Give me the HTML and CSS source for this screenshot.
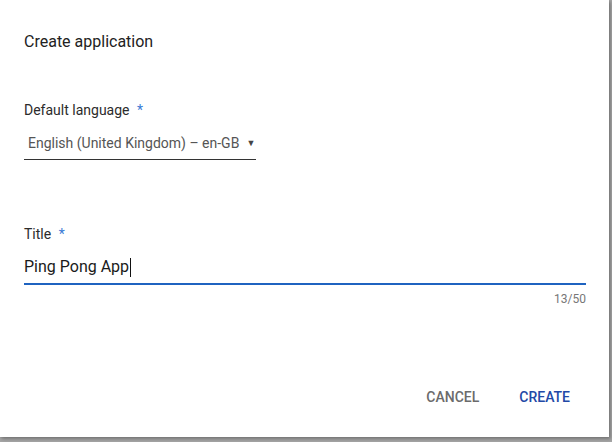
FILE: index.html
```html
<!DOCTYPE html>
<html lang="en">
<head>
<meta charset="utf-8">
<title>Create application</title>
<link rel="stylesheet" href="styles.css">
</head>
<body>
<div class="dialog">
  <h2 class="dialog-title">Create application</h2>
  <div class="field field-lang">
    <div class="label">Default language <span class="req">*</span></div>
    <div class="select">
      <span class="select-value">English (United Kingdom) – en-GB</span>
      <span class="arrow">▼</span>
    </div>
  </div>
  <div class="field field-title">
    <div class="label">Title <span class="req">*</span></div>
    <div class="input"><span class="input-value">Ping Pong App</span><span class="caret"></span></div>
    <div class="counter">13/50</div>
  </div>
  <div class="actions">
    <button class="btn btn-cancel">Cancel</button>
    <button class="btn btn-create">Create</button>
  </div>
</div>
</body>
</html>
```
FILE: styles.css
```css
html, body {
  margin: 0;
  padding: 0;
}
body {
  width: 612px;
  height: 442px;
  background: #a6a6a6;
  font-family: Roboto, "Liberation Sans", sans-serif;
  overflow: hidden;
}
.dialog {
  box-sizing: border-box;
  width: 609px;
  height: 437px;
  background: #ffffff;
  padding: 30px 23px 0 24px;
  box-shadow: 1px 1px 3px rgba(0,0,0,0.25), 2px 3px 4px rgba(0,0,0,0.12);
}
.dialog-title {
  margin: 0;
  font-size: 16px;
  line-height: 24px;
  font-weight: 400;
  color: #222222;
}
.field-lang {
  margin-top: 46px;
}
.label {
  font-size: 14px;
  line-height: 20px;
  color: #2b2b2b;
}
.req {
  color: #3a7bd5;
  margin-left: 4px;
}
.select {
  width: 232px;
  box-sizing: border-box;
  margin-top: 13px;
  padding: 0 0 6px 4px;
  border-bottom: 1px solid #333333;
  display: flex;
  align-items: center;
  font-size: 14px;
  line-height: 20px;
  color: #555555;
}
.arrow {
  font-size: 9px;
  margin-left: 7px;
  color: #444444;
}
.field-title {
  margin-top: 64px;
}
.input {
  margin-top: 11px;
  padding-bottom: 4px;
  border-bottom: 2px solid #1f63c0;
  font-size: 16px;
  line-height: 24px;
  color: #1a1a1a;
  display: flex;
  align-items: center;
}
.caret {
  display: inline-block;
  width: 1px;
  height: 19px;
  background: #111111;
  margin-left: 1px;
}
.counter {
  margin-top: 6px;
  text-align: right;
  font-size: 12px;
  line-height: 16px;
  color: #777777;
}
.actions {
  margin-top: 72px;
  display: flex;
  justify-content: flex-end;
  gap: 8px;
}
.btn {
  font-family: Roboto, "Liberation Sans", sans-serif;
  background: transparent;
  border: 0;
  padding: 0 16px;
  height: 36px;
  font-size: 14px;
  font-weight: 500;
  text-transform: uppercase;
  letter-spacing: 0;
  cursor: pointer;
}
.btn-cancel {
  color: #6b6b6b;
}
.btn-create {
  color: #2249a6;
}
```
